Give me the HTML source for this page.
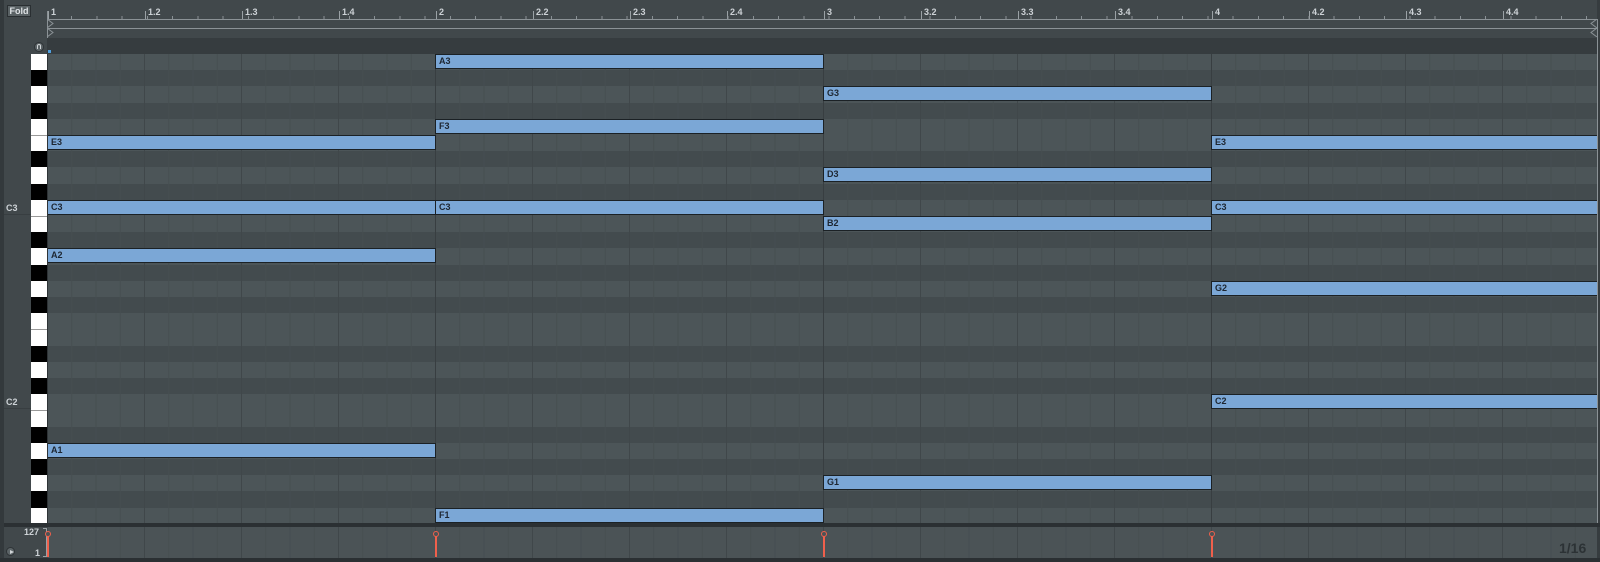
<!DOCTYPE html>
<html><head><style>
*{margin:0;padding:0;box-sizing:border-box}
body{width:1600px;height:562px;background:#41484b;position:relative;overflow:hidden;font-family:"Liberation Sans",sans-serif}
.a{position:absolute}
.row{position:absolute;left:0;width:1550px;height:16.2px;background:#434b4e}
.n{position:absolute;height:15px;background:#7ba7d6;border:1px solid #1b2125;font-size:9px;font-weight:bold;color:#1d2631;padding-left:3px;line-height:13px}
.k{position:absolute;left:31px;width:16px;height:16.2px}
.rl{position:absolute;top:7px;font-size:9px;font-weight:bold;color:#cdd2d6}
.tk{position:absolute;top:11px;width:1px;height:8px;background:#9aa1a5}
.st{position:absolute;top:16px;width:1px;height:3px;background:#8a9195}
.vl{position:absolute;top:535px;width:2px;height:22px;background:#f0604c}
.vc{position:absolute;top:531px;width:6px;height:6px;border:1.5px solid #f0604c;border-radius:50%;background:#4b5356}
</style></head><body>
<div class="a" style="left:0;top:0;width:4px;height:562px;background:#33393c"></div>
<!-- ruler -->
<div class="a" style="left:47px;top:0;width:1553px;height:38px;background:#41484b"></div>
<div class="a" style="left:47px;top:19px;width:1550px;height:1px;background:#8b9296"></div>
<div class="a" style="left:47px;top:28px;width:1550px;height:1px;background:#8b9296"></div>
<div class="a" style="left:47px;top:11px;width:1px;height:42px;background:#8b9296"></div>
<div class="a" style="left:47px;top:38px;width:1550px;height:16px;background:#363c3f"></div>
<div class="a" style="left:1597px;top:0;width:3px;height:562px;background:#363c3f"></div>
<div class="a" style="left:1597px;top:19px;width:1px;height:504px;background:#8b9296"></div>
<svg class="a" style="left:47px;top:19px" width="8" height="18"><path d="M0 0 L6 4.5 L0 9 L6 13.5 L0 18" fill="none" stroke="#8b9296"/></svg>
<svg class="a" style="left:1590px;top:19px" width="8" height="18"><path d="M7 0 L1 4.5 L7 9 L1 13.5 L7 18" fill="none" stroke="#8b9296"/></svg>
<div class="a" style="left:7px;top:5px;width:24px;height:12px;background:#5a6265;border:1px solid #2a2f32;font-size:9px;font-weight:bold;color:#dfe3e6;text-align:center;line-height:10px">Fold</div>
<div class="a" style="left:34px;top:42px;width:10px;height:10px;border-radius:50%;background:#5c6467;border:1px solid #2e3336"></div>
<div class="a" style="left:37px;top:44px;width:4px;height:5px;border:1.5px solid #d0d4d7;border-bottom:none;border-radius:3px 3px 0 0"></div>
<div class="a" style="left:48px;top:50px;width:3px;height:3px;background:#4fa0e0"></div>

<div class="tk" style="left:47.5px"></div><div class="rl" style="left:51px">1</div>
<div class="tk" style="left:144.5px"></div><div class="rl" style="left:148px">1.2</div>
<div class="tk" style="left:241.5px"></div><div class="rl" style="left:245px">1.3</div>
<div class="tk" style="left:338.5px"></div><div class="rl" style="left:342px">1.4</div>
<div class="tk" style="left:435.5px"></div><div class="rl" style="left:439px">2</div>
<div class="tk" style="left:532.5px"></div><div class="rl" style="left:536px">2.2</div>
<div class="tk" style="left:629.5px"></div><div class="rl" style="left:633px">2.3</div>
<div class="tk" style="left:726.5px"></div><div class="rl" style="left:730px">2.4</div>
<div class="tk" style="left:823.5px"></div><div class="rl" style="left:827px">3</div>
<div class="tk" style="left:920.5px"></div><div class="rl" style="left:924px">3.2</div>
<div class="tk" style="left:1017.5px"></div><div class="rl" style="left:1021px">3.3</div>
<div class="tk" style="left:1114.5px"></div><div class="rl" style="left:1118px">3.4</div>
<div class="tk" style="left:1211.5px"></div><div class="rl" style="left:1215px">4</div>
<div class="tk" style="left:1308.5px"></div><div class="rl" style="left:1312px">4.2</div>
<div class="tk" style="left:1405.5px"></div><div class="rl" style="left:1409px">4.3</div>
<div class="tk" style="left:1502.5px"></div><div class="rl" style="left:1506px">4.4</div>
<div class="a" style="left:47px;top:16px;width:1550px;height:3px;background:repeating-linear-gradient(to right,transparent 0,transparent 24.25px,#8a9195 24.25px,#8a9195 25.25px)"></div>

<!-- grid -->
<div class="a" style="left:47px;top:54px;width:1550px;height:470px;background:#4c5558;overflow:hidden">
<div class="row" style="top:16.2px"></div><div class="row" style="top:48.6px"></div>
<div class="row" style="top:97.2px"></div><div class="row" style="top:129.6px"></div>
<div class="row" style="top:178.2px"></div><div class="row" style="top:210.6px"></div>
<div class="row" style="top:243px"></div><div class="row" style="top:291.6px"></div>
<div class="row" style="top:324px"></div><div class="row" style="top:372.6px"></div>
<div class="row" style="top:405px"></div><div class="row" style="top:437.4px"></div>
<div class="a" style="left:0;top:0;width:1550px;height:470px;background:linear-gradient(to right,#383e41 1px,transparent 1px) 0 0/388px 100%,linear-gradient(to right,#40474a 1px,transparent 1px) 0 0/97px 100%,linear-gradient(to right,#464e51 1px,transparent 1px) 0 0/24.25px 100%"></div>
<div class="n" style="top:0;left:388px;width:389px">A3</div>
<div class="n" style="top:32.4px;left:776px;width:389px">G3</div>
<div class="n" style="top:64.8px;left:388px;width:389px">F3</div>
<div class="n" style="top:81px;left:0;width:389px">E3</div>
<div class="n" style="top:81px;left:1164px;width:389px">E3</div>
<div class="n" style="top:113.4px;left:776px;width:389px">D3</div>
<div class="n" style="top:145.8px;left:0;width:389px">C3</div>
<div class="n" style="top:145.8px;left:388px;width:389px">C3</div>
<div class="n" style="top:145.8px;left:1164px;width:389px">C3</div>
<div class="n" style="top:162px;left:776px;width:389px">B2</div>
<div class="n" style="top:194.4px;left:0;width:389px">A2</div>
<div class="n" style="top:226.8px;left:1164px;width:389px">G2</div>
<div class="n" style="top:340.2px;left:1164px;width:389px">C2</div>
<div class="n" style="top:388.8px;left:0;width:389px">A1</div>
<div class="n" style="top:421.2px;left:776px;width:389px">G1</div>
<div class="n" style="top:453.6px;left:388px;width:389px">F1</div>
</div>

<!-- keys -->
<div class="a" style="left:31px;top:54px;width:16px;height:470px;background:#fff"></div>
<div class="k" style="top:70.2px;background:#000"></div><div class="k" style="top:102.6px;background:#000"></div>
<div class="k" style="top:151.2px;background:#000"></div><div class="k" style="top:183.6px;background:#000"></div>
<div class="k" style="top:232.2px;background:#000"></div><div class="k" style="top:264.6px;background:#000"></div>
<div class="k" style="top:297px;background:#000"></div><div class="k" style="top:345.6px;background:#000"></div>
<div class="k" style="top:378px;background:#000"></div><div class="k" style="top:426.6px;background:#000"></div>
<div class="k" style="top:459px;background:#000"></div><div class="k" style="top:491.4px;background:#000"></div>
<div class="a" style="left:31px;top:134.6px;width:16px;height:1px;background:#999"></div>
<div class="a" style="left:31px;top:215.6px;width:16px;height:1px;background:#999"></div>
<div class="a" style="left:31px;top:329.0px;width:16px;height:1px;background:#999"></div>
<div class="a" style="left:31px;top:410.0px;width:16px;height:1px;background:#999"></div>
<div class="a" style="left:47px;top:54px;width:1px;height:470px;background:#2e3336"></div>
<div class="a" style="left:6px;top:203px;font-size:9px;font-weight:bold;color:#cdd2d6">C3</div>
<div class="a" style="left:4px;top:214px;width:27px;height:1px;background:#383e41"></div>
<div class="a" style="left:6px;top:397px;font-size:9px;font-weight:bold;color:#cdd2d6">C2</div>
<div class="a" style="left:4px;top:408px;width:27px;height:1px;background:#383e41"></div>

<!-- velocity -->
<div class="a" style="left:4px;top:523px;width:1596px;height:4px;background:#2b3033"></div>
<div class="a" style="left:47px;top:527px;width:1550px;height:31px;background:#4b5356;background-image:linear-gradient(to right,#40474a 1px,transparent 1px),linear-gradient(to right,#464e51 1px,transparent 1px);background-size:97px 100%,24.25px 100%"></div>
<div class="a" style="left:0;top:558px;width:1600px;height:4px;background:#2b3033"></div>
<div class="a" style="left:24px;top:527px;font-size:9px;font-weight:bold;color:#cdd2d6">127</div>
<div class="a" style="left:35px;top:548px;font-size:9px;font-weight:bold;color:#cdd2d6">1</div>
<div class="a" style="left:43px;top:528px;width:4px;height:29px;border:1px solid #9aa1a5;border-left:none"></div>
<div class="a" style="left:6px;top:547px;width:9px;height:9px;border-radius:50%;background:#5c6467;border:1px solid #2e3336"></div>
<div class="a" style="left:10px;top:549.5px;width:0;height:0;border-left:4px solid #d0d4d7;border-top:2.5px solid transparent;border-bottom:2.5px solid transparent"></div>
<div class="vl" style="left:47px"></div><div class="vc" style="left:45px"></div>
<div class="vl" style="left:435px"></div><div class="vc" style="left:433px"></div>
<div class="vl" style="left:823px"></div><div class="vc" style="left:821px"></div>
<div class="vl" style="left:1211px"></div><div class="vc" style="left:1209px"></div>
<div class="a" style="left:1559px;top:540px;font-size:14px;font-weight:bold;color:#2c3235">1/16</div>
</body></html>
